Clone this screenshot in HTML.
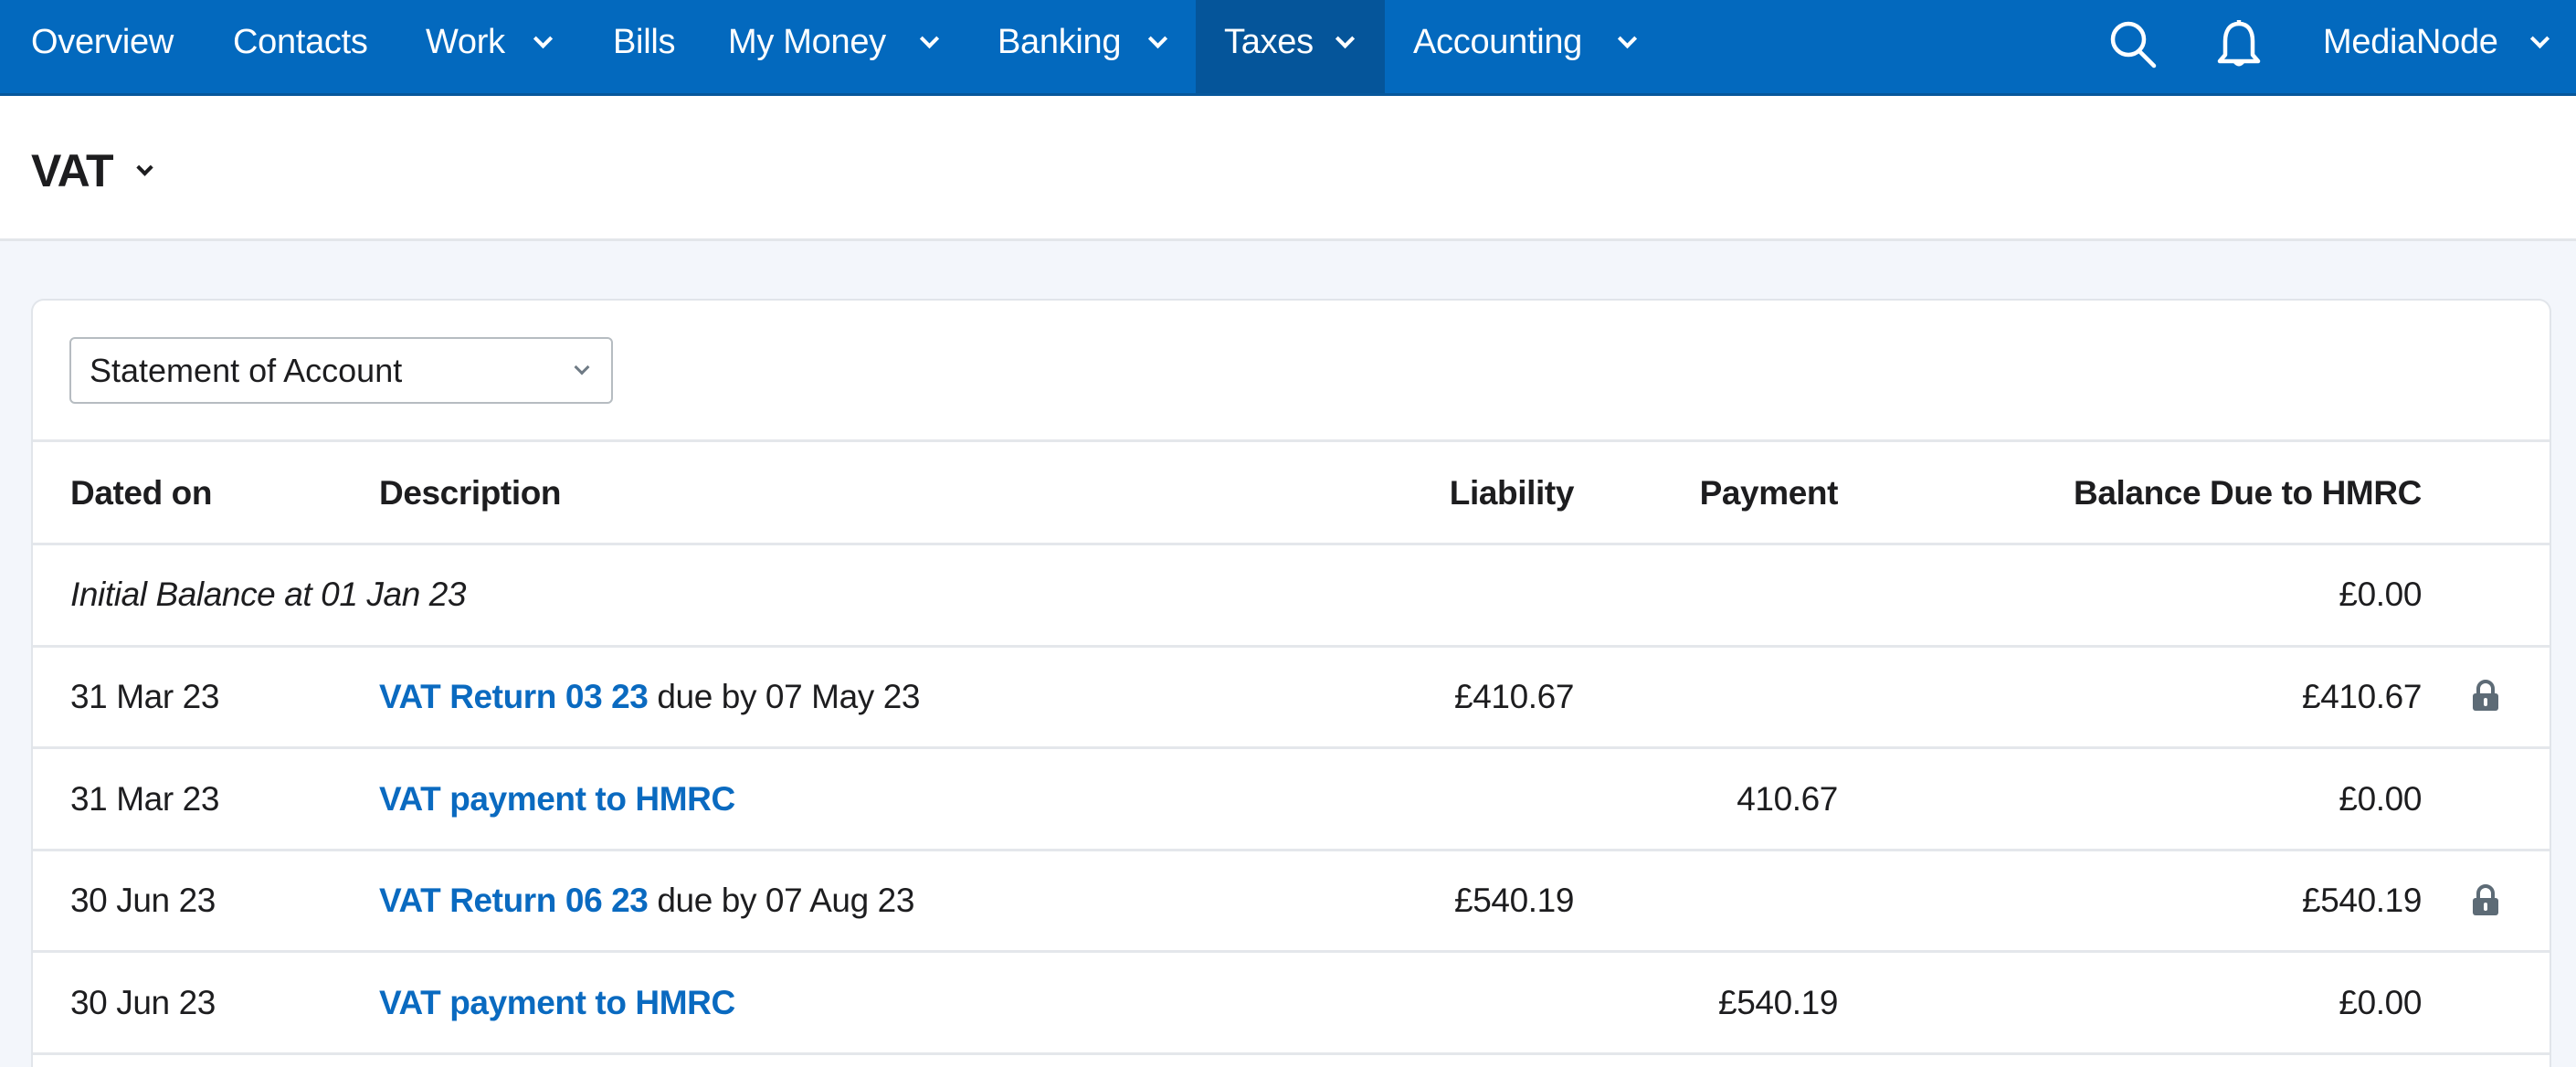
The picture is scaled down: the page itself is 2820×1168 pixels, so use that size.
<!DOCTYPE html>
<html><head><meta charset="utf-8"><style>
*{margin:0;padding:0;box-sizing:border-box}
html,body{width:2820px;height:1168px;overflow:hidden}
body{background:#f3f6fb;font-family:"Liberation Sans",sans-serif;color:#1d1d1f;position:relative}
.nav{position:absolute;left:0;top:0;width:2820px;height:105px;background:#0369be;border-bottom:3px solid #07579b}
.nav .it{position:absolute;top:0;height:102px;line-height:92px;color:#fff;font-size:38px;letter-spacing:-0.3px;white-space:nowrap}
.act{position:absolute;left:1309px;top:0;width:207px;height:102px;background:#05559a}
.chev{display:inline-block;width:15px;height:15px;border-right:4px solid currentColor;border-bottom:4px solid currentColor;transform:rotate(45deg);position:absolute}
.hdr{position:absolute;left:0;top:105px;width:2820px;height:159px;background:#fff;border-bottom:3px solid #e3e6ea}
.vat{position:absolute;left:34px;top:160px;font-size:50px;font-weight:bold;letter-spacing:-1px;line-height:54px}
.card{position:absolute;left:34px;top:327px;width:2759px;height:841px;background:#fff;border:2px solid #e1e5ea;border-bottom:none;border-radius:14px 14px 0 0}
.sel{position:absolute;left:76px;top:369px;width:595px;height:73px;border:2px solid #b6bcc1;border-radius:6px;background:#fff;font-size:36px;line-height:69px;padding-left:20px}
.line{position:absolute;left:36px;width:2755px;height:3px;background:#e4e7eb}
.t{position:absolute;font-size:37px;line-height:40px;white-space:nowrap;letter-spacing:-0.4px}
.b{font-weight:bold}
.r{text-align:right}
a{color:#0a6ac0;font-weight:bold;text-decoration:none}
</style></head><body>
<div class="nav">
<div class="act"></div>
<div class="it" style="left:34px">Overview</div>
<div class="it" style="left:255px">Contacts</div>
<div class="it" style="left:466px">Work</div><span class="chev" style="left:587px;top:35px;color:#fff"></span>
<div class="it" style="left:671px">Bills</div>
<div class="it" style="left:797px">My Money</div><span class="chev" style="left:1010px;top:35px;color:#fff"></span>
<div class="it" style="left:1092px">Banking</div><span class="chev" style="left:1260px;top:35px;color:#fff"></span>
<div class="it" style="left:1340px">Taxes</div><span class="chev" style="left:1465px;top:35px;color:#fff"></span>
<div class="it" style="left:1547px">Accounting</div><span class="chev" style="left:1774px;top:35px;color:#fff"></span>
<svg style="position:absolute;left:2300px;top:18px" width="70" height="70" viewBox="0 0 70 70"><circle cx="30" cy="25" r="17" fill="none" stroke="#fff" stroke-width="4.5"/><line x1="42" y1="38" x2="58" y2="54" stroke="#fff" stroke-width="4.5" stroke-linecap="round"/></svg>
<svg style="position:absolute;left:2420px;top:18px" width="64" height="64" viewBox="0 0 64 64"><path d="M31 4 V8 M31 8 C20 8 16 17 16 27 V42 L10 49 H52 L46 42 V27 C46 17 42 8 31 8 Z" fill="none" stroke="#fff" stroke-width="4.5" stroke-linejoin="round"/><path d="M25 51 Q31 58 37 51 Z" fill="#fff"/></svg>
<div class="it" style="left:2543px">MediaNode</div><span class="chev" style="left:2773px;top:35px;color:#fff"></span>
</div>
<div class="hdr"></div>
<div class="vat">VAT</div><span class="chev" style="left:152px;top:177px;color:#1d1d1f;width:13px;height:13px;border-width:0 4px 4px 0"></span>
<div class="card"></div>
<div class="sel">Statement of Account</div><span class="chev" style="left:631px;top:396px;color:#6f7b85;width:12px;height:12px;border-width:0 3.5px 3.5px 0"></span>
<div class="line" style="top:481px"></div>
<div class="line" style="top:594px"></div>
<div class="line" style="top:706px"></div>
<div class="line" style="top:817px"></div>
<div class="line" style="top:929px"></div>
<div class="line" style="top:1040px"></div>
<div class="line" style="top:1152px"></div>

<div class="t b" style="left:77px;top:520px">Dated on</div>
<div class="t b" style="left:415px;top:520px">Description</div>
<div class="t b r" style="right:1097px;top:520px">Liability</div>
<div class="t b r" style="right:808px;top:520px">Payment</div>
<div class="t b r" style="right:169px;top:520px">Balance Due to HMRC</div>

<div class="t" style="left:77px;top:631px;font-style:italic">Initial Balance at 01 Jan 23</div>
<div class="t r" style="right:169px;top:631px">£0.00</div>

<div class="t" style="left:77px;top:743px">31 Mar 23</div>
<div class="t" style="left:415px;top:743px"><a>VAT Return 03 23</a> due by 07 May 23</div>
<div class="t r" style="right:1097px;top:743px">£410.67</div>
<div class="t r" style="right:169px;top:743px">£410.67</div>

<div class="t" style="left:77px;top:855px">31 Mar 23</div>
<div class="t" style="left:415px;top:855px"><a>VAT payment to HMRC</a></div>
<div class="t r" style="right:808px;top:855px">410.67</div>
<div class="t r" style="right:169px;top:855px">£0.00</div>

<div class="t" style="left:77px;top:966px">30 Jun 23</div>
<div class="t" style="left:415px;top:966px"><a>VAT Return 06 23</a> due by 07 Aug 23</div>
<div class="t r" style="right:1097px;top:966px">£540.19</div>
<div class="t r" style="right:169px;top:966px">£540.19</div>

<div class="t" style="left:77px;top:1078px">30 Jun 23</div>
<div class="t" style="left:415px;top:1078px"><a>VAT payment to HMRC</a></div>
<div class="t r" style="right:808px;top:1078px">£540.19</div>
<div class="t r" style="right:169px;top:1078px">£0.00</div>

<svg style="position:absolute;left:2704px;top:744px" width="34" height="36" viewBox="0 0 34 36"><path d="M9 16 V10 A8 8 0 0 1 25 10 V16" fill="none" stroke="#5d6b76" stroke-width="4"/><rect x="3" y="15" width="28" height="19" rx="3" fill="#5d6b76"/><rect x="15" y="20" width="4" height="9" rx="2" fill="#fff"/></svg>
<svg style="position:absolute;left:2704px;top:968px" width="34" height="36" viewBox="0 0 34 36"><path d="M9 16 V10 A8 8 0 0 1 25 10 V16" fill="none" stroke="#5d6b76" stroke-width="4"/><rect x="3" y="15" width="28" height="19" rx="3" fill="#5d6b76"/><rect x="15" y="20" width="4" height="9" rx="2" fill="#fff"/></svg>
</body></html>
